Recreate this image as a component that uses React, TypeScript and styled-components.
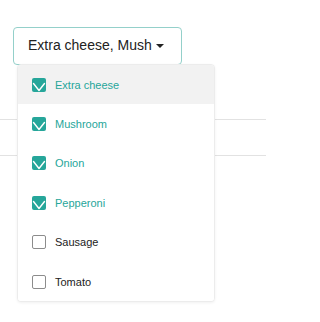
import React, { useState } from 'react'
import styled, { createGlobalStyle } from 'styled-components'

const GlobalStyle = createGlobalStyle`
  html, body {
    margin: 0;
    padding: 0;
    background: #fff;
  }
  body {
    font-family: "Liberation Sans", Arial, sans-serif;
  }
`

const Page = styled.div`
  padding-top: 27px;
  width: 266px;
  height: 322px;
  overflow: hidden;
  box-sizing: border-box;
`

const Field = styled.div`
  position: relative;
  width: 169px;
  margin-left: 13px;
  z-index: 2;
`

const Trigger = styled.button`
  display: flex;
  align-items: center;
  width: 100%;
  height: 38px;
  box-sizing: border-box;
  padding: 0 17px 3px 14px;
  background: #fff;
  border: 1px solid #94d0ca;
  border-radius: 4px;
  font-family: "Liberation Sans", Arial, sans-serif;
  font-size: 14px;
  color: #222;
  cursor: pointer;
`

const TriggerLabel = styled.span`
  flex: 1;
  min-width: 0;
  overflow: hidden;
  white-space: nowrap;
  text-align: left;
`

const Caret = styled.span`
  flex: none;
  margin-left: 4px;
  margin-top: 2px;
  width: 0;
  height: 0;
  border-left: 4px solid transparent;
  border-right: 4px solid transparent;
  border-top: 4px solid #222;
`

const Menu = styled.ul`
  position: absolute;
  top: calc(100% - 1px);
  left: 4px;
  width: 198px;
  margin: 0;
  padding: 0;
  list-style: none;
  background: #fff;
  border: 1px solid #ececec;
  border-radius: 4px;
  box-shadow: 0 1px 3px rgba(0, 0, 0, 0.06);
  box-sizing: border-box;
  overflow: hidden;
`

const Item = styled.li<{ $active?: boolean; $checked?: boolean }>`
  display: flex;
  align-items: center;
  gap: 9px;
  height: 39.4px;
  padding-left: 14px;
  background: ${(p) => (p.$active ? '#f2f2f2' : '#fff')};
  color: ${(p) => (p.$checked ? '#26a69a' : '#222')};
  font-size: 11px;
  cursor: pointer;
`

const Box = styled.span<{ $checked?: boolean }>`
  display: flex;
  flex: none;
  width: 14px;
  height: 14px;
  box-sizing: border-box;
  border-radius: 2px;
  background: ${(p) => (p.$checked ? '#26a69a' : '#fff')};
  border: ${(p) => (p.$checked ? 'none' : '1.5px solid #8c8c8c')};
  overflow: visible;
`

const Band = styled.div`
  margin-top: 54px;
  height: 37px;
  box-sizing: border-box;
  border-top: 1px solid #e2e2e2;
  border-bottom: 1px solid #e2e2e2;
`

const toppings = ['Extra cheese', 'Mushroom', 'Onion', 'Pepperoni', 'Sausage', 'Tomato']

function Check() {
  return (
    <svg width="14" height="14" viewBox="0 0 14 14" style={{ overflow: 'visible' }}>
      <polyline
        points="1.5,5.5 7,12.5 12.5,5.5"
        fill="none"
        stroke="#fff"
        strokeWidth="1.4"
        strokeLinecap="round"
        strokeLinejoin="round"
      />
    </svg>
  )
}

export default function App() {
  const [selected, setSelected] = useState<string[]>([
    'Extra cheese',
    'Mushroom',
    'Onion',
    'Pepperoni',
  ])

  const toggle = (name: string) =>
    setSelected((s) => (s.includes(name) ? s.filter((x) => x !== name) : [...s, name]))

  return (
    <Page>
      <GlobalStyle />
      <Field>
        <Trigger>
          <TriggerLabel>{selected.join(', ')}</TriggerLabel>
          <Caret />
        </Trigger>
        <Menu>
          {toppings.map((t, i) => {
            const checked = selected.includes(t)
            return (
              <Item key={t} $active={i === 0} $checked={checked} onClick={() => toggle(t)}>
                <Box $checked={checked}>{checked && <Check />}</Box>
                {t}
              </Item>
            )
          })}
        </Menu>
      </Field>
      <Band />
    </Page>
  )
}
